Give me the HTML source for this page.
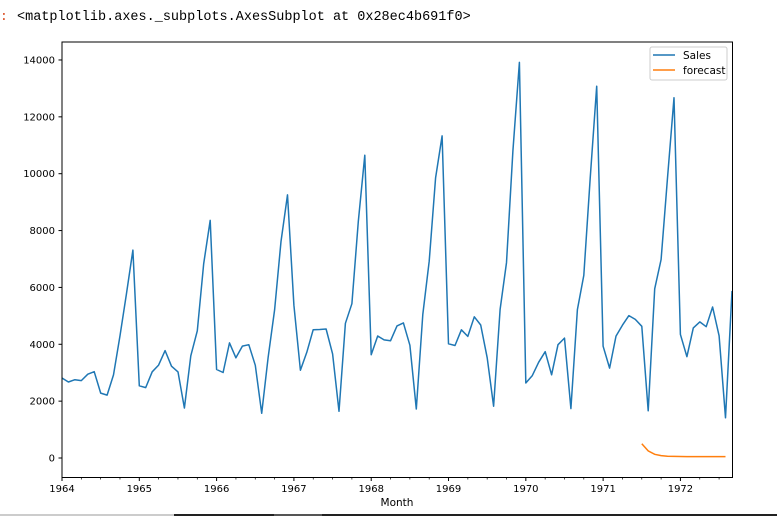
<!DOCTYPE html>
<html><head><meta charset="utf-8"><style>
html,body{margin:0;padding:0;background:#fff;width:777px;height:516px;overflow:hidden}
svg{position:absolute;left:0;top:0}
</style></head><body>
<svg id="s" width="777" height="516" xmlns="http://www.w3.org/2000/svg" font-family="'DejaVu Sans','Liberation Sans',sans-serif">
<text x="0" y="20" font-family="'Liberation Mono',monospace" font-size="13" fill="#d84315">:</text>
<text x="17" y="20" font-family="'Liberation Mono','DejaVu Sans Mono',monospace" font-size="13.5" fill="#000">&lt;matplotlib.axes._subplots.AxesSubplot at 0x28ec4b691f0&gt;</text>
<g id="g"></g>
<rect x="62" y="42" width="670.5" height="435.5" fill="none" stroke="#000" stroke-width="1"/>
<rect x="650" y="47" width="77" height="33" rx="2" fill="#fff" fill-opacity="0.8" stroke="#ccc"/>
<line x1="653" y1="55" x2="675" y2="55" stroke="#1f77b4" stroke-width="1.5"/>
<text x="683" y="59" font-size="10.5">Sales</text>
<line x1="653" y1="70" x2="675" y2="70" stroke="#ff7f0e" stroke-width="1.5"/>
<text x="683" y="74" font-size="10.5">forecast</text>
<text x="397" y="506" font-size="10.5" text-anchor="middle">Month</text>
<rect x="0" y="514" width="174" height="2" fill="#ccc"/>
<rect x="174" y="514" width="100" height="2" fill="#222"/>
<rect x="274" y="514" width="48" height="2" fill="#555"/>
<rect x="322" y="514" width="455" height="2" fill="#222"/>
</svg>
<script>
var d=[2815,2672,2755,2721,2946,3036,2282,2212,2922,4301,5764,7312,2541,2475,3031,3266,3776,3230,3028,1759,3595,4474,6838,8357,3113,3006,4047,3523,3937,3986,3260,1573,3528,5211,7614,9254,5375,3088,3718,4514,4520,4539,3663,1643,4739,5428,8314,10651,3633,4292,4154,4121,4647,4753,3965,1723,5048,6922,9858,11331,4016,3957,4510,4276,4968,4677,3523,1821,5222,6872,10803,13916,2639,2899,3370,3740,2927,3986,4217,1738,5221,6424,9842,13076,3934,3162,4286,4676,5010,4874,4633,1659,5951,6981,9851,12670,4348,3564,4577,4788,4618,5312,4298,1413,5877];
var f=[500,250,130,85,65,55,52,50,50,50,50,50,50,50];
function X(i){return 62+i*6.442}function Y(v){return 458-v*0.02843}
var h='';
for(var v=0;v<=14000;v+=2000){var y=Y(v);h+='<line x1="58.5" y1="'+y+'" x2="62" y2="'+y+'" stroke="#000"/><text x="55" y="'+(y+3.5)+'" font-size="10" text-anchor="end">'+v+'</text>';}
for(var i=0;i<=104;i+=3){var x=X(i);var maj=i%12==0;h+='<line x1="'+x+'" y1="477.5" x2="'+x+'" y2="'+(maj?481:479.5)+'" stroke="#000" stroke-width="'+(maj?1:0.7)+'"/>';if(maj)h+='<text x="'+x+'" y="492" font-size="10" text-anchor="middle">'+(1964+i/12)+'</text>';}
var p=d.map(function(v,i){return X(i).toFixed(1)+','+Y(v).toFixed(1)}).join(' ');
h+='<polyline points="'+p+'" fill="none" stroke="#1f77b4" stroke-width="1.5" stroke-linejoin="round"/>';
var q=f.map(function(v,i){return X(90+i).toFixed(1)+','+Y(v).toFixed(1)}).join(' ');
h+='<polyline points="'+q+'" fill="none" stroke="#ff7f0e" stroke-width="1.5"/>';
document.getElementById('g').innerHTML=h;
</script>
</body></html>
